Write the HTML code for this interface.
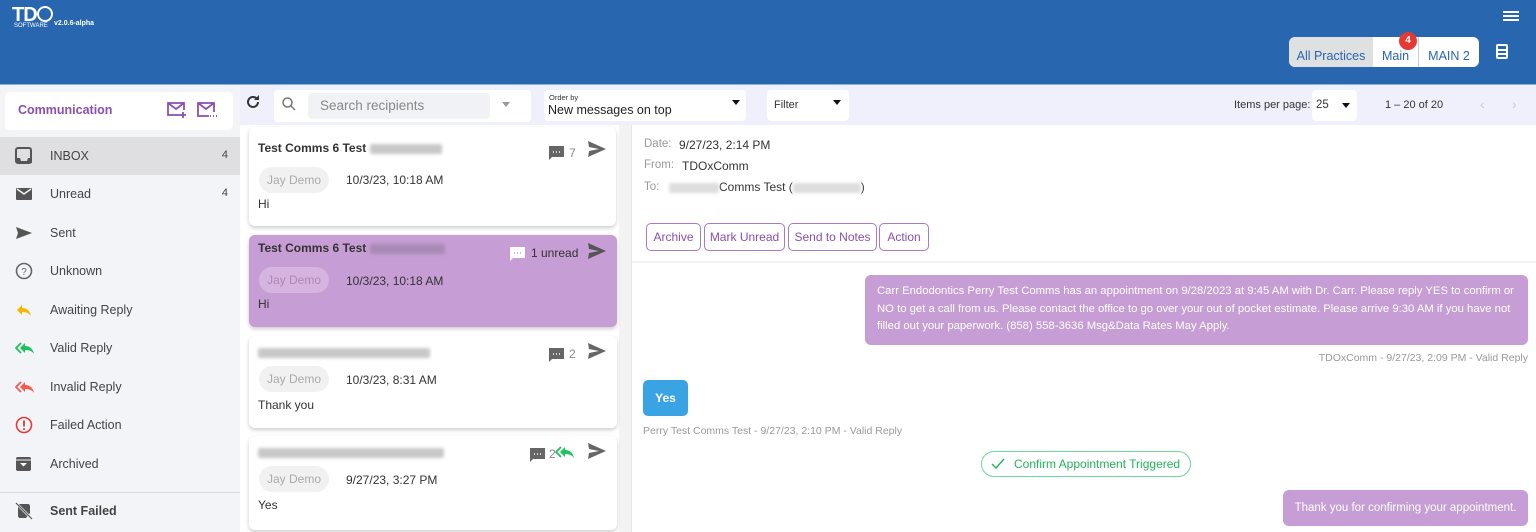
<!DOCTYPE html>
<html><head><meta charset="utf-8"><style>
*{box-sizing:border-box;margin:0;padding:0}
body{width:1536px;height:532px;overflow:hidden;font-family:"Liberation Sans",Arial,sans-serif;background:#fff;position:relative;color:#333}
.abs{position:absolute}
.hdr{left:0;top:0;width:1536px;height:85px;background:#2966b0;border-bottom:1px solid #8ab0e0}
.side{left:0;top:85px;width:240px;height:447px;background:#f3f4f8}
.tb{left:240px;top:85px;width:1296px;height:40px;background:#f0f0fc}
.item{position:absolute;left:0;width:240px;height:38px;font-size:12.5px;color:#444}
.item span.l{position:absolute;left:50px;top:12px}
.item span.c{position:absolute;right:12px;top:12px;font-size:11px}
.item svg{position:absolute;left:15px;top:10px}
.card{position:absolute;left:249px;width:368px;background:#fff;border-radius:6px;box-shadow:0 2px 4px rgba(0,0,0,.2)}
.card .t{position:absolute;left:9px;top:14px;font-size:12px;font-weight:bold;color:#333}
.blur{display:inline-block;height:10px;background:#c8c8c8;vertical-align:middle;border-radius:2px;filter:blur(1.5px)}
.chip{position:absolute;left:10px;top:30px;width:70px;height:26px;border-radius:13px;background:#f1f1f1;color:#aaa;font-size:12px;text-align:center;line-height:26px}
.dt{position:absolute;left:97px;top:37px;font-size:12px;color:#333}
.msg{position:absolute;left:9px;top:70px;font-size:12px;color:#333}
.btn{position:absolute;top:223px;height:28px;border:1px solid #a67bc8;border-radius:5px;color:#8a4fb0;font-size:12px;line-height:26px;text-align:center}
</style></head><body>
<div class="abs hdr">
 <div class="abs" style="left:12px;top:4px;color:#fff;font-weight:bold;font-size:20px;letter-spacing:-1px">TD<span style="display:inline-block;width:16px;height:16px;border-radius:50%;border:2px solid #fff;vertical-align:-1px"></span></div>
 <div class="abs" style="left:14px;top:23px;color:#fff;font-size:6px">SOFTWARE</div>
 <div class="abs" style="left:54px;top:20px;color:#fff;font-size:7px;font-weight:bold">v2.0.6-alpha</div>
 <div class="abs" style="left:1503px;top:11px;width:16px;height:2px;background:#fff;box-shadow:0 4px 0 #fff,0 8px 0 #fff"></div>
 <div class="abs" style="left:1289px;top:37px;width:190px;height:30px;background:#fff;border-radius:6px;overflow:hidden;font-size:12.5px;color:#2966b0">
  <div class="abs" style="left:0;top:0;width:84px;height:30px;background:#dfe0e2;text-align:center;line-height:38px">All Practices</div>
  <div class="abs" style="left:84px;top:0;width:45px;text-align:center;line-height:38px">Main</div>
  <div class="abs" style="left:129px;top:0;width:61px;border-left:1px solid #ccd;height:30px;text-align:center;line-height:38px">MAIN 2</div>
 </div>
 <div class="abs" style="left:1399px;top:32px;width:18px;height:18px;border-radius:50%;background:#e53935;color:#fff;font-size:10px;font-weight:bold;text-align:center;line-height:18px">4</div>
 <div class="abs" style="left:1496px;top:44px;width:12px;height:15px;border:2px solid #fff;border-radius:2px"></div>
 <div class="abs" style="left:1498px;top:49px;width:8px;height:2px;background:#fff;box-shadow:0 4px 0 #fff"></div>
</div>
<div class="abs side">
 <div class="abs" style="left:5px;top:7px;width:228px;height:38px;background:#fff;border-radius:5px">
  <div class="abs" style="left:13px;top:11px;color:#8a4fb0;font-weight:bold;font-size:12.5px">Communication</div>
  <svg class="abs" style="left:162px;top:10px" width="20" height="16" viewBox="0 0 20 16" fill="none" stroke="#8a4fb0" stroke-width="1.8"><path d="M13 13H1V1h16v7M1 1l8 6 8-6M16 10v6M13 13h6"/></svg>
  <svg class="abs" style="left:192px;top:10px" width="20" height="16" viewBox="0 0 20 16" fill="none" stroke="#8a4fb0" stroke-width="1.8"><path d="M12 14H1V1h16v9M1 1l8 6 8-6"/><path d="M13 14h1M16 14h1M19 14h1" stroke-width="2"/></svg>
 </div>
 <div class="item" style="top:52px;background:#dfdfe2"><svg width="18" height="18" viewBox="0 0 18 18"><rect x="1" y="1" width="15" height="15" rx="2" fill="none" stroke="#555" stroke-width="2"/><path d="M1 11h4l1 3h6l1-3h4v5H1z" fill="#555"/></svg><span class="l">INBOX</span><span class="c">4</span></div>
 <div class="item" style="top:90px"><svg width="18" height="18" viewBox="0 0 18 18"><rect x="1" y="3" width="16" height="12" rx="1" fill="#555"/><path d="M2 4l7 5 7-5" stroke="#f3f4f8" stroke-width="1.5" fill="none"/></svg><span class="l">Unread</span><span class="c">4</span></div>
 <div class="item" style="top:129px"><svg width="18" height="18" viewBox="0 0 18 18"><path d="M1 3l16 6-16 6 2-6z" fill="#555"/></svg><span class="l">Sent</span></div>
 <div class="item" style="top:167px"><svg width="18" height="18" viewBox="0 0 18 18"><circle cx="9" cy="9" r="7.5" fill="none" stroke="#666" stroke-width="1.6"/><text x="9" y="13" font-size="10" text-anchor="middle" fill="#666" font-family="Liberation Sans">?</text></svg><span class="l">Unknown</span></div>
 <div class="item" style="top:206px"><svg width="18" height="18" viewBox="0 0 18 18"><path d="M7 4L2 9l5 5v-3c4 0 7 1 9 4-1-5-4-8-9-8z" fill="#f5b800"/></svg><span class="l">Awaiting Reply</span></div>
 <div class="item" style="top:244px"><svg width="20" height="18" viewBox="0 0 20 18"><path d="M10 4L5 9l5 5v-3c4 0 7 1 9 4-1-5-4-8-9-8z" fill="#1cc45a"/><path d="M6 4L1 9l5 5" stroke="#1cc45a" stroke-width="1.8" fill="none"/></svg><span class="l">Valid Reply</span></div>
 <div class="item" style="top:283px"><svg width="20" height="18" viewBox="0 0 20 18"><path d="M10 4L5 9l5 5v-3c4 0 7 1 9 4-1-5-4-8-9-8z" fill="#f25c4c"/><path d="M6 4L1 9l5 5" stroke="#f25c4c" stroke-width="1.8" fill="none"/></svg><span class="l">Invalid Reply</span></div>
 <div class="item" style="top:321px"><svg width="18" height="18" viewBox="0 0 18 18"><circle cx="9" cy="9" r="7.5" fill="none" stroke="#e53935" stroke-width="1.6"/><path d="M9 4.5v6" stroke="#e53935" stroke-width="1.8"/><circle cx="9" cy="13" r="1" fill="#e53935"/></svg><span class="l">Failed Action</span></div>
 <div class="item" style="top:360px"><svg width="18" height="18" viewBox="0 0 18 18"><rect x="1" y="2" width="15" height="14" rx="2" fill="#555"/><path d="M5 8l3.5 3.5L12 8z" fill="#fff"/><path d="M1 5h15" stroke="#f3f4f8"/></svg><span class="l">Archived</span></div>
 <div class="abs" style="left:0;top:407px;width:240px;height:1px;background:#d6d6da"></div>
 <div class="item" style="top:407px;font-weight:bold"><svg width="18" height="18" viewBox="0 0 18 18"><path d="M3 4c0-1 1-2 2-2h8c1 0 2 1 2 2v7l-4 5H5c-1 0-2-1-2-2z" fill="#555"/><path d="M1 1l16 16" stroke="#f3f4f8" stroke-width="2.5"/><path d="M1 1l16 16" stroke="#555" stroke-width="1.2"/></svg><span class="l">Sent Failed</span></div>
</div>
<div class="abs tb">
 <svg class="abs" style="left:5px;top:9px" width="16" height="16" viewBox="0 0 16 16"><path d="M13 8a5 5 0 1 1-1.5-3.6" fill="none" stroke="#333" stroke-width="2"/><path d="M14 1v5H9z" fill="#333"/></svg>
 <div class="abs" style="left:34px;top:5px;width:257px;height:32px;background:#fff;border-radius:4px"></div>
 <svg class="abs" style="left:42px;top:12px" width="14" height="14" viewBox="0 0 14 14"><circle cx="5.5" cy="5.5" r="4.5" fill="none" stroke="#777" stroke-width="1.5"/><path d="M9 9l4 4" stroke="#777" stroke-width="1.5"/></svg>
 <div class="abs" style="left:68px;top:8px;width:182px;height:26px;background:#f1f2f5;border-radius:4px;color:#888;font-size:13.5px;padding:5px 12px">Search recipients</div>
 <div class="abs" style="left:262px;top:17px;border:4px solid transparent;border-top:5px solid #999"></div>
 <div class="abs" style="left:304px;top:5px;width:202px;height:31px;background:#fff;border-radius:4px">
  <div class="abs" style="left:5px;top:3px;font-size:7.5px;color:#333">Order by</div>
  <div class="abs" style="left:4px;top:13px;font-size:12.5px;color:#222">New messages on top</div>
  <div class="abs" style="left:188px;top:10px;border:4px solid transparent;border-top:5px solid #111"></div>
 </div>
 <div class="abs" style="left:527px;top:5px;width:82px;height:31px;background:#fff;border-radius:4px">
  <div class="abs" style="left:7px;top:9px;font-size:11px;color:#333">Filter</div>
  <div class="abs" style="left:66px;top:10px;border:4px solid transparent;border-top:5px solid #111"></div>
 </div>
 <div class="abs" style="left:994px;top:14px;font-size:11px;color:#333">Items per page:</div>
 <div class="abs" style="left:1072px;top:5px;width:45px;height:31px;background:#fff;border-radius:4px"><div class="abs" style="left:4px;top:9px;font-size:11.5px">25</div><div class="abs" style="left:30px;top:13px;border:4px solid transparent;border-top:5px solid #111"></div></div>
 <div class="abs" style="left:1145px;top:14px;font-size:11px;color:#333">1 – 20 of 20</div>
 <div class="abs" style="left:1240px;top:11px;font-size:14px;color:#ccc">‹</div>
 <div class="abs" style="left:1272px;top:11px;font-size:14px;color:#ccc">›</div>
</div>
<div class="abs" style="left:619px;top:125px;width:12px;height:407px;background:#f3f3f3"></div>
<div class="abs" style="left:631px;top:125px;width:1px;height:407px;background:#e6e6e6"></div>

<div class="card" style="top:127px;height:99px;left:249px;width:367px"><div class="t">Test Comms 6 Test <span class="blur" style="width:72px"></span></div>
 <svg class="abs" style="left:299px;top:17px" width="17" height="17" viewBox="0 0 17 17"><path d="M1 2h15v11H4l-3 3z" fill="#666"/><path d="M5 8h1M8 8h1M11 8h1" stroke="#fff" stroke-width="1.5"/></svg><div class="abs" style="left:320px;top:19px;font-size:12px;color:#888">7</div>
 <svg class="abs" style="left:339px;top:14px" width="18" height="16" viewBox="0 0 18 16"><path d="M0 0l18 8-18 8 1-6 10-2-10-2z" fill="#666"/></svg>
 <div class="chip" style="top:40px">Jay Demo</div><div class="dt" style="top:46px">10/3/23, 10:18 AM</div><div class="msg" style="top:70px">Hi</div></div>
<div class="card" style="top:235px;height:92px;background:#c69dd4"><div class="t" style="top:6px">Test Comms 6 Test <span class="blur" style="width:75px;background:#a98ab5"></span></div>
 <svg class="abs" style="left:260px;top:10px" width="17" height="17" viewBox="0 0 17 17"><path d="M1 2h15v11H4l-3 3z" fill="#fff"/><path d="M5 8h1M8 8h1M11 8h1" stroke="#c69dd4" stroke-width="1.5"/></svg><div class="abs" style="left:282px;top:11px;font-size:12px;color:#333">1 unread</div>
 <svg class="abs" style="left:339px;top:8px" width="18" height="16" viewBox="0 0 18 16"><path d="M0 0l18 8-18 8 1-6 10-2-10-2z" fill="#555"/></svg>
 <div class="chip" style="top:32px;background:#d5b5e0;color:#aa8ab5">Jay Demo</div><div class="dt" style="top:39px">10/3/23, 10:18 AM</div><div class="msg" style="top:62px">Hi</div></div>
<div class="card" style="top:336px;height:92px"><div class="t" style="top:9px"><span class="blur" style="width:172px"></span></div>
 <svg class="abs" style="left:299px;top:10px" width="17" height="17" viewBox="0 0 17 17"><path d="M1 2h15v11H4l-3 3z" fill="#666"/><path d="M5 8h1M8 8h1M11 8h1" stroke="#fff" stroke-width="1.5"/></svg><div class="abs" style="left:320px;top:11px;font-size:12px;color:#888">2</div>
 <svg class="abs" style="left:339px;top:7px" width="18" height="16" viewBox="0 0 18 16"><path d="M0 0l18 8-18 8 1-6 10-2-10-2z" fill="#666"/></svg>
 <div class="chip" style="top:30px">Jay Demo</div><div class="dt" style="top:37px">10/3/23, 8:31 AM</div><div class="msg" style="top:62px">Thank you</div></div>
<div class="card" style="top:436px;height:94px"><div class="t" style="top:9px"><span class="blur" style="width:186px"></span></div>
 <svg class="abs" style="left:280px;top:10px" width="17" height="17" viewBox="0 0 17 17"><path d="M1 2h15v11H4l-3 3z" fill="#666"/><path d="M5 8h1M8 8h1M11 8h1" stroke="#fff" stroke-width="1.5"/></svg><div class="abs" style="left:300px;top:11px;font-size:12px;color:#888">2</div>
 <svg class="abs" style="left:305px;top:9px" width="22" height="14" viewBox="0 0 22 14"><path d="M11 2L6 7l5 5V9c4 0 7 1 9 4-1-5-4-8-9-8z" fill="#1cc45a"/><path d="M7 2L2 7l5 5" stroke="#1cc45a" stroke-width="1.8" fill="none"/></svg>
 <svg class="abs" style="left:339px;top:7px" width="18" height="16" viewBox="0 0 18 16"><path d="M0 0l18 8-18 8 1-6 10-2-10-2z" fill="#666"/></svg>
 <div class="chip" style="top:30px">Jay Demo</div><div class="dt" style="top:37px">9/27/23, 3:27 PM</div><div class="msg" style="top:62px">Yes</div></div>

<div class="abs" style="left:644px;top:138px;font-size:11.5px;color:#999">Date:</div><div class="abs" style="left:679px;top:138px;font-size:12px;color:#333">9/27/23, 2:14 PM</div>
<div class="abs" style="left:644px;top:159px;font-size:11.5px;color:#999">From:</div><div class="abs" style="left:682px;top:159px;font-size:12px;color:#333">TDOxComm</div>
<div class="abs" style="left:644px;top:181px;font-size:11.5px;color:#999">To:</div><div class="abs" style="left:669px;top:180px;font-size:12px;color:#333"><span class="blur" style="width:50px;background:#ddd"></span>Comms Test (<span class="blur" style="width:68px;background:#ddd"></span>)</div>
<div class="btn" style="left:646px;width:55px">Archive</div>
<div class="btn" style="left:704px;width:81px">Mark Unread</div>
<div class="btn" style="left:788px;width:89px">Send to Notes</div>
<div class="btn" style="left:879px;width:50px">Action</div>
<div class="abs" style="left:632px;top:261px;width:904px;height:2px;background:#f2f2f4"></div>
<div class="abs" style="left:865px;top:275px;width:663px;height:70px;background:#c69dd4;border-radius:6px;color:#fff;font-size:11.3px;line-height:17.5px;padding:8px 9px 0 12px">Carr Endodontics Perry Test Comms has an appointment on 9/28/2023 at 9:45 AM with Dr. Carr. Please reply YES to confirm or NO to get a call from us. Please contact the office to go over your out of pocket estimate. Please arrive 9:30 AM if you have not filled out your paperwork. (858) 558-3636 Msg&amp;Data Rates May Apply.</div>
<div class="abs" style="right:8px;top:352px;font-size:10.5px;color:#999">TDOxComm - 9/27/23, 2:09 PM - Valid Reply</div>
<div class="abs" style="left:643px;top:380px;width:45px;height:36px;background:#3aa3e3;border-radius:5px;color:#fff;font-size:12px;font-weight:bold;text-align:center;line-height:36px">Yes</div>
<div class="abs" style="left:643px;top:425px;font-size:10.5px;color:#999">Perry Test Comms Test - 9/27/23, 2:10 PM - Valid Reply</div>
<div class="abs" style="left:981px;top:451px;width:210px;height:26px;border:1px solid #6fd99a;border-radius:13px;color:#22b45a;font-size:12px;line-height:24px;padding-left:32px">Confirm Appointment Triggered</div>
<svg class="abs" style="left:991px;top:458px" width="14" height="12" viewBox="0 0 14 12"><path d="M1 6l4 4 8-9" stroke="#22b45a" stroke-width="1.4" fill="none"/></svg>
<div class="abs" style="left:1283px;top:490px;width:245px;height:36px;background:#c69dd4;border-radius:6px;color:#fff;font-size:11.5px;line-height:36px;text-align:center">Thank you for confirming your appointment.</div>
</body></html>
